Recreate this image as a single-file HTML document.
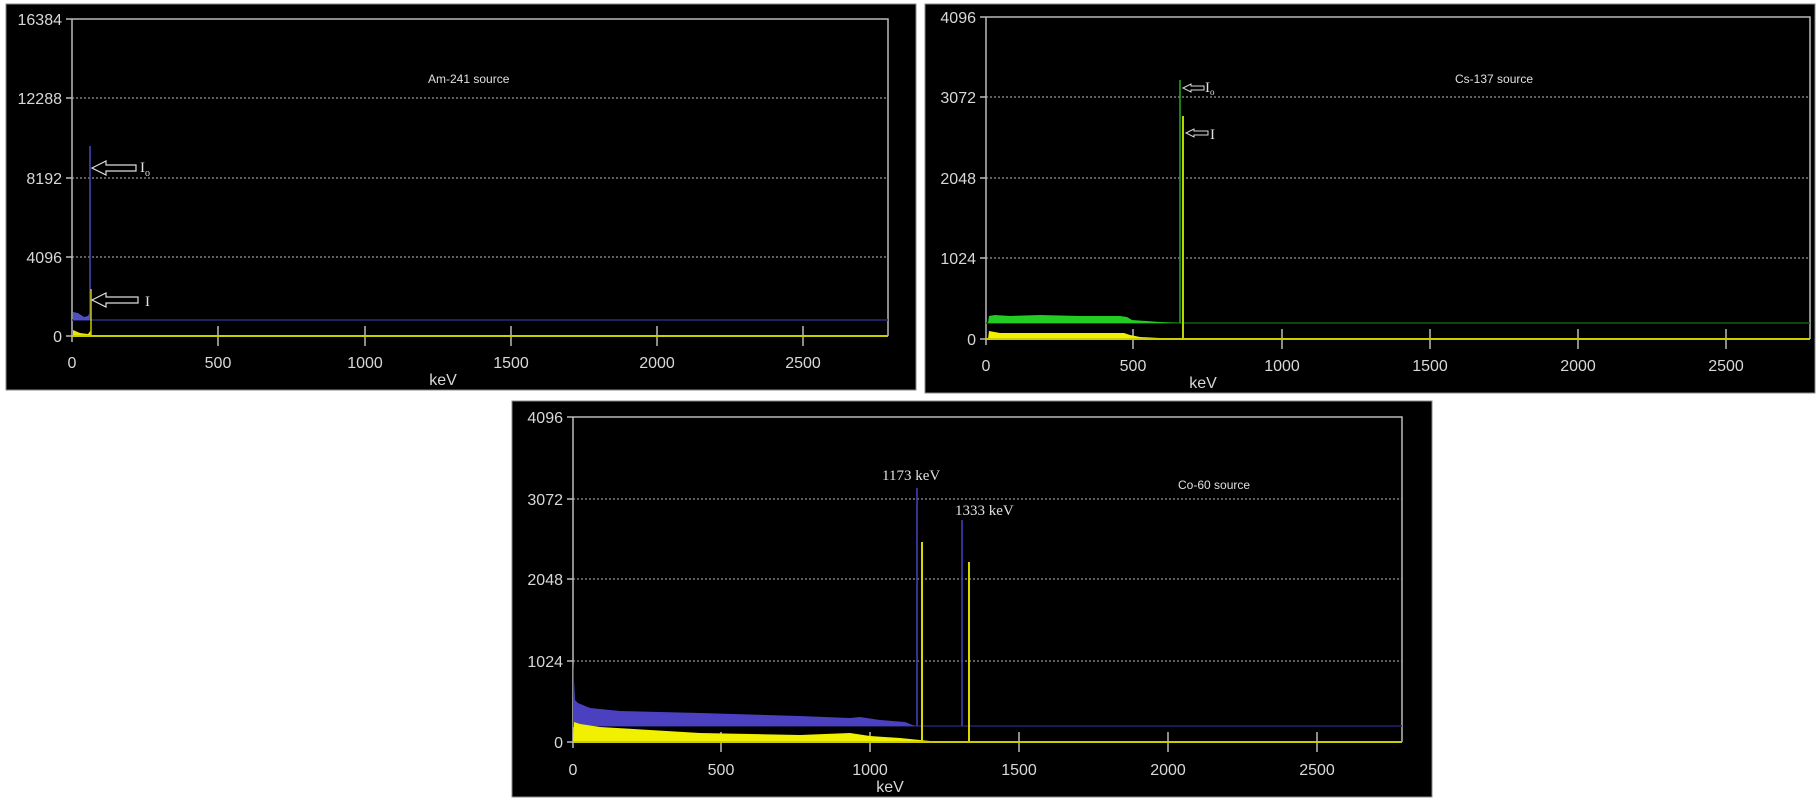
<!DOCTYPE html>
<html><head><meta charset="utf-8"><style>
html,body{margin:0;padding:0;background:#fff;}
svg{display:block}
.ax{font-family:"Liberation Sans",sans-serif;font-size:16px;fill:#d8d8d8;}
.sr{font-family:"Liberation Serif",serif;font-size:15px;fill:#e0e0e0;}
.lb{font-family:"Liberation Sans",sans-serif;font-size:12px;fill:#e0e0e0;}
</style></head><body>
<svg width="1820" height="803" viewBox="0 0 1820 803" xmlns="http://www.w3.org/2000/svg">
<rect width="1820" height="803" fill="#fff"/>
<!-- Panel 1 -->
<rect x="6" y="4" width="910" height="386" fill="#000" stroke="#888" stroke-width="1"/>
<g stroke="#bbb" stroke-width="1" stroke-dasharray="2,2">
<line x1="72" y1="98" x2="888" y2="98"/><line x1="72" y1="178" x2="888" y2="178"/><line x1="72" y1="257" x2="888" y2="257"/>
</g>
<g stroke="#bbb" stroke-width="1.5" fill="none">
<polyline points="66,19 888,19 888,336"/><line x1="72" y1="19" x2="72" y2="342"/>
<line x1="66" y1="98" x2="72" y2="98"/><line x1="66" y1="178" x2="72" y2="178"/><line x1="66" y1="257" x2="72" y2="257"/><line x1="66" y1="336" x2="72" y2="336"/>
<line x1="218" y1="326" x2="218" y2="346"/><line x1="365" y1="326" x2="365" y2="346"/><line x1="511" y1="326" x2="511" y2="346"/><line x1="657" y1="326" x2="657" y2="346"/><line x1="803" y1="326" x2="803" y2="346"/>
</g>
<line x1="72" y1="320" x2="888" y2="320" stroke="#2a2a80" stroke-width="1.5"/>
<polygon points="73,320 73,312 78,313 84,317 88,316 90,312 90,320" fill="#5050c0"/>
<line x1="90" y1="320" x2="90" y2="146" stroke="#4848c0" stroke-width="1.5"/>
<polygon points="73,336 73,330 80,333 88,334 91,330 91,336" fill="#e6e600"/>
<line x1="91" y1="336" x2="91" y2="289" stroke="#c8c800" stroke-width="1.5"/>
<line x1="72" y1="336" x2="888" y2="336" stroke="#cccc00" stroke-width="2"/>
<path d="M92,168 L106,161 L106,165 L136,165 L136,171 L106,171 L106,175 Z" fill="none" stroke="#ddd" stroke-width="1.2"/>
<path d="M92,300 L106,293 L106,297 L138,297 L138,303 L106,303 L106,307 Z" fill="none" stroke="#ddd" stroke-width="1.2"/>
<text x="140" y="172" class="sr" font-size="17">I<tspan font-size="10" dy="4">o</tspan></text>
<text x="145" y="306" class="sr" font-size="17">I</text>
<text x="62" y="25" class="ax" text-anchor="end">16384</text>
<text x="62" y="104" class="ax" text-anchor="end">12288</text>
<text x="62" y="184" class="ax" text-anchor="end">8192</text>
<text x="62" y="263" class="ax" text-anchor="end">4096</text>
<text x="62" y="342" class="ax" text-anchor="end">0</text>
<g class="ax" text-anchor="middle"><text x="72" y="368">0</text><text x="218" y="368">500</text><text x="365" y="368">1000</text><text x="511" y="368">1500</text><text x="657" y="368">2000</text><text x="803" y="368">2500</text></g>
<text x="443" y="385" class="ax" text-anchor="middle">keV</text>
<text x="428" y="83" class="lb">Am-241 source</text>

<!-- Panel 2 -->
<rect x="925" y="4" width="890" height="389" fill="#000" stroke="#888" stroke-width="1"/>
<g stroke="#bbb" stroke-width="1" stroke-dasharray="2,2">
<line x1="986" y1="97" x2="1810" y2="97"/><line x1="986" y1="178" x2="1810" y2="178"/><line x1="986" y1="258" x2="1810" y2="258"/>
</g>
<g stroke="#bbb" stroke-width="1.5" fill="none">
<polyline points="980,17 1810,17 1810,339"/><line x1="986" y1="17" x2="986" y2="345"/>
<line x1="980" y1="97" x2="986" y2="97"/><line x1="980" y1="178" x2="986" y2="178"/><line x1="980" y1="258" x2="986" y2="258"/><line x1="980" y1="339" x2="986" y2="339"/>
<line x1="1133" y1="329" x2="1133" y2="349"/><line x1="1282" y1="329" x2="1282" y2="349"/><line x1="1430" y1="329" x2="1430" y2="349"/><line x1="1578" y1="329" x2="1578" y2="349"/><line x1="1726" y1="329" x2="1726" y2="349"/>
</g>
<line x1="986" y1="323" x2="1810" y2="323" stroke="#0f5f0f" stroke-width="1.5"/>
<polygon points="988,323 989,316 995,315 1010,316 1040,315 1080,316 1120,316 1127,317 1132,320 1160,322 1180,323" fill="#22cc22"/>
<line x1="1180" y1="323" x2="1180" y2="80" stroke="#22aa22" stroke-width="1.5"/>
<line x1="1183" y1="339" x2="1183" y2="116" stroke="#b8d400" stroke-width="2"/>
<polygon points="988,339 989,331 1000,333 1040,333 1080,333 1124,333 1130,335 1140,337 1160,338 1180,339" fill="#f0f000"/>
<line x1="986" y1="339" x2="1810" y2="339" stroke="#cccc00" stroke-width="2"/>
<path d="M1183,88 L1191,84 L1191,86 L1204,86 L1204,90 L1191,90 L1191,92 Z" fill="none" stroke="#ddd" stroke-width="1"/>
<path d="M1186,133 L1194,129 L1194,131 L1208,131 L1208,135 L1194,135 L1194,137 Z" fill="none" stroke="#ddd" stroke-width="1"/>
<text x="1205" y="92" class="sr" font-size="16">I<tspan font-size="9" dy="3">o</tspan></text>
<text x="1210" y="139" class="sr" font-size="16">I</text>
<text x="976" y="23" class="ax" text-anchor="end">4096</text>
<text x="976" y="103" class="ax" text-anchor="end">3072</text>
<text x="976" y="184" class="ax" text-anchor="end">2048</text>
<text x="976" y="264" class="ax" text-anchor="end">1024</text>
<text x="976" y="345" class="ax" text-anchor="end">0</text>
<g class="ax" text-anchor="middle"><text x="986" y="371">0</text><text x="1133" y="371">500</text><text x="1282" y="371">1000</text><text x="1430" y="371">1500</text><text x="1578" y="371">2000</text><text x="1726" y="371">2500</text></g>
<text x="1203" y="388" class="ax" text-anchor="middle">keV</text>
<text x="1455" y="83" class="lb">Cs-137 source</text>

<!-- Panel 3 -->
<rect x="512" y="401" width="920" height="396" fill="#000" stroke="#888" stroke-width="1"/>
<g stroke="#bbb" stroke-width="1" stroke-dasharray="2,2">
<line x1="573" y1="499" x2="1402" y2="499"/><line x1="573" y1="579" x2="1402" y2="579"/><line x1="573" y1="661" x2="1402" y2="661"/>
</g>
<g stroke="#bbb" stroke-width="1.5" fill="none">
<polyline points="567,417 1402,417 1402,742"/><line x1="573" y1="417" x2="573" y2="748"/>
<line x1="567" y1="499" x2="573" y2="499"/><line x1="567" y1="579" x2="573" y2="579"/><line x1="567" y1="661" x2="573" y2="661"/><line x1="567" y1="742" x2="573" y2="742"/>
<line x1="721" y1="732" x2="721" y2="752"/><line x1="870" y1="732" x2="870" y2="752"/><line x1="1019" y1="732" x2="1019" y2="752"/><line x1="1168" y1="732" x2="1168" y2="752"/><line x1="1317" y1="732" x2="1317" y2="752"/>
</g>
<line x1="573" y1="726" x2="1402" y2="726" stroke="#23236e" stroke-width="1.5"/>
<polygon points="573,726 573,660 575,700 578,703 590,708 620,711 700,713 800,716 850,718 860,717 880,720 905,722 915,726" fill="#4a40c0"/>
<line x1="917" y1="726" x2="917" y2="488" stroke="#4840c0" stroke-width="1.5"/>
<line x1="962" y1="726" x2="962" y2="520" stroke="#4840c0" stroke-width="1.5"/>
<polygon points="573,742 574,722 580,724 600,727 650,730 700,733 800,735 850,733 870,736 900,738 920,740 940,742" fill="#f0f000"/>
<line x1="922" y1="742" x2="922" y2="542" stroke="#d8d800" stroke-width="2"/>
<line x1="969" y1="742" x2="969" y2="562" stroke="#d8d800" stroke-width="2"/>
<line x1="573" y1="742" x2="1402" y2="742" stroke="#cccc00" stroke-width="2"/>
<text x="882" y="480" class="sr" font-size="16">1173 keV</text>
<text x="955" y="515" class="sr" font-size="16">1333 keV</text>
<text x="1178" y="489" class="lb">Co-60 source</text>
<text x="563" y="423" class="ax" text-anchor="end">4096</text>
<text x="563" y="505" class="ax" text-anchor="end">3072</text>
<text x="563" y="585" class="ax" text-anchor="end">2048</text>
<text x="563" y="667" class="ax" text-anchor="end">1024</text>
<text x="563" y="748" class="ax" text-anchor="end">0</text>
<g class="ax" text-anchor="middle"><text x="573" y="775">0</text><text x="721" y="775">500</text><text x="870" y="775">1000</text><text x="1019" y="775">1500</text><text x="1168" y="775">2000</text><text x="1317" y="775">2500</text></g>
<text x="890" y="792" class="ax" text-anchor="middle">keV</text>
</svg>
</body></html>
